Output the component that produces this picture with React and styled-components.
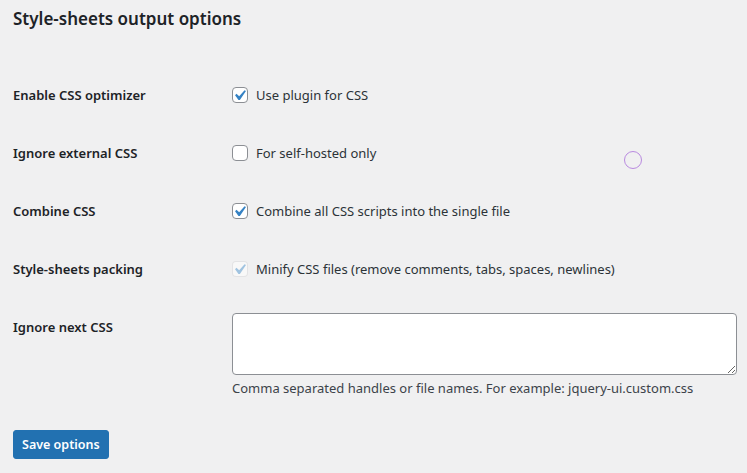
import React from 'react';
import styled, { createGlobalStyle } from 'styled-components';

const GlobalStyle = createGlobalStyle`
    html, body {
        margin: 0;
        padding: 0;
        background: #f0f0f1;
    }
    body {
        font-family: "Noto Sans", "Open Sans", sans-serif;
        font-size: 13px;
        color: #1d2327;
    }
`;

const Page = styled.div`
    position: relative;
    min-height: 473px;
    padding: 0 10px 0 13px;
    box-sizing: border-box;
`;

const Title = styled.h2`
    margin: 0;
    padding-top: 7px;
    font-size: 17px;
    line-height: 23px;
    font-weight: 600;
    color: #1d2327;
`;

const Form = styled.div`
    margin-top: 36px;
    display: flex;
    flex-direction: column;
`;

const Row = styled.div`
    display: flex;
    align-items: flex-start;
`;

const Label = styled.div`
    width: 219px;
    flex-shrink: 0;
    padding: 20px 0;
    font-weight: 600;
    line-height: 18px;
`;

const Field = styled.div`
    flex: 1;
    padding: 15px 0;
    display: flex;
    flex-direction: column;
`;

const CheckLine = styled.label`
    display: flex;
    align-items: center;
    gap: 8px;
    height: 28px;
    line-height: 18px;
    color: #2c3338;
`;

const Box = styled.span`
    width: 16px;
    height: 16px;
    box-sizing: border-box;
    border: 1px solid ${p => p.disabled ? 'rgba(220,220,222,0.75)' : '#8c8f94'};
    border-radius: 4px;
    background: ${p => p.disabled ? 'rgba(255,255,255,0.5)' : '#fff'};
    display: flex;
    align-items: center;
    justify-content: center;
    flex-shrink: 0;
    overflow: visible;
`;

const CheckIcon = styled.svg`
    width: 21px;
    height: 21px;
    margin: -3px -3px -3px -4px;
    flex-shrink: 0;
`;

const TextArea = styled.textarea`
    width: 100%;
    height: 62px;
    box-sizing: border-box;
    border: 1px solid #8c8f94;
    border-radius: 4px;
    background: #fff;
    resize: vertical;
    font-family: inherit;
    font-size: 14px;
    margin-top: 0;
    display: block;
`;

const Description = styled.p`
    margin: 3px 0 0;
    line-height: 20px;
    color: #3c434a;
`;

const SaveButton = styled.button`
    align-self: flex-start;
    margin-top: 17px;
    height: 29px;
    padding: 0 8px;
    border: 1px solid #2271b1;
    border-radius: 3px;
    background: #2271b1;
    color: #fff;
    font-family: inherit;
    font-size: 12.5px;
    font-weight: 600;
    cursor: pointer;
`;

const CursorRing = styled.span`
    position: absolute;
    left: 624px;
    top: 151px;
    width: 18px;
    height: 18px;
    border: 1.5px solid #b98ae0;
    border-radius: 50%;
    box-sizing: border-box;
`;

const Check = ({ color }) => (
    <CheckIcon viewBox="0 0 20 20">
        <path d="M14.83 4.89l1.34.94-5.81 8.38H9.02L5.78 9.67l1.34-1.25 2.57 2.4z" fill={color} />
    </CheckIcon>
);

const Checkbox = ({ checked, disabled, children }) => (
    <CheckLine>
        <Box disabled={disabled}>
            {checked && <Check color={disabled ? 'rgba(53,130,196,0.45)' : '#3582c4'} />}
        </Box>
        {children}
    </CheckLine>
);

const rows = [
    { label: 'Enable CSS optimizer', text: 'Use plugin for CSS', checked: true },
    { label: 'Ignore external CSS', text: 'For self-hosted only', checked: false },
    { label: 'Combine CSS', text: 'Combine all CSS scripts into the single file', checked: true },
    { label: 'Style-sheets packing', text: 'Minify CSS files (remove comments, tabs, spaces, newlines)', checked: true, disabled: true },
];

export default function App() {
    return (
        <Page>
            <GlobalStyle />
            <Title>Style-sheets output options</Title>
            <Form>
                {rows.map(r => (
                    <Row key={r.label}>
                        <Label>{r.label}</Label>
                        <Field>
                            <Checkbox checked={r.checked} disabled={r.disabled}>{r.text}</Checkbox>
                        </Field>
                    </Row>
                ))}
                <Row>
                    <Label>Ignore next CSS</Label>
                    <Field>
                        <TextArea />
                        <Description>Comma separated handles or file names. For example: jquery-ui.custom.css</Description>
                    </Field>
                </Row>
                <SaveButton>Save options</SaveButton>
            </Form>
            <CursorRing />
        </Page>
    );
}
